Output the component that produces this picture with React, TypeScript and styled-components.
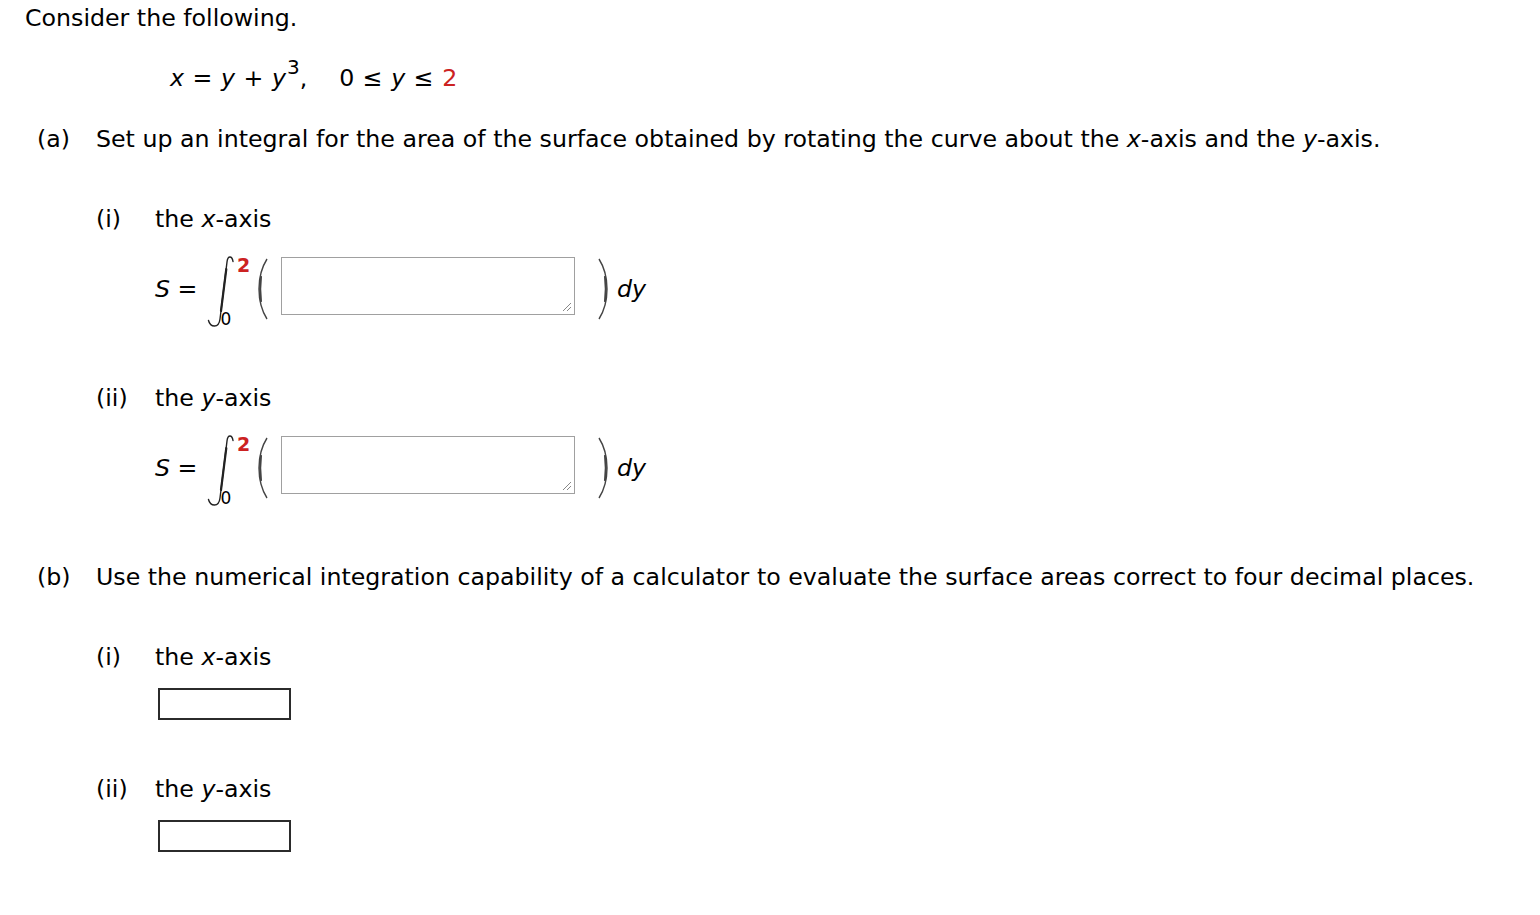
import React from "react";
import styled, { createGlobalStyle } from "styled-components";

const GlobalStyle = createGlobalStyle`
  html, body {
    margin: 0;
    padding: 0;
    background: #ffffff;
  }
  body {
    font-family: "DejaVu Sans", Verdana, sans-serif;
    font-size: 23.7px;
    color: #000;
  }
`;

const Page = styled.div`
  padding: 3px 0 40px 25px;
`;

const Line = styled.div<{ $top?: number; $indent?: number }>`
  line-height: 30px;
  height: 30px;
  margin-top: ${(p) => p.$top ?? 0}px;
  margin-left: ${(p) => p.$indent ?? 0}px;
  white-space: nowrap;
  display: flex;
  align-items: center;
`;

const Equation = styled(Line)`
  word-spacing: 1px;
`;

const Label = styled.span<{ $width: number }>`
  display: inline-block;
  width: ${(p) => p.$width}px;
  flex: none;
`;

const I = styled.i`
  font-style: italic;
`;

const Red = styled.span`
  color: #cc2222;
`;

const Sup = styled.sup`
  font-size: 20px;
  position: relative;
  top: -11px;
  line-height: 0;
  vertical-align: baseline;
  margin-left: 1px;
`;

const Gap = styled.span<{ $w: number }>`
  display: inline-block;
  width: ${(p) => p.$w}px;
`;

const IntegralRow = styled.div<{ $top: number }>`
  display: flex;
  align-items: center;
  height: 70px;
  margin-top: ${(p) => p.$top}px;
  margin-left: 130px;
`;

const Lhs = styled.span`
  width: 52px;
  flex: none;
`;

const IntegralSign = styled.span`
  position: relative;
  display: inline-block;
  width: 50px;
  height: 72px;
  flex: none;
`;

const Limit = styled.span<{ $upper?: boolean }>`
  position: absolute;
  ${(p) =>
    p.$upper
      ? "left: 30px; top: 2.8px; font-size: 19px; line-height: 19px; font-weight: bold; color: #cc2222;"
      : "left: 13.5px; top: 57.5px; font-size: 17px; line-height: 17px;"}
`;

const Paren = styled.svg`
  flex: none;
  display: block;
`;

const AnswerArea = styled.div`
  position: relative;
  box-sizing: border-box;
  width: 294px;
  height: 58px;
  border: 1.5px solid #a0a0a0;
  background: #fff;
  margin: 0 22px 7px 12px;
  flex: none;
`;

const Grip = styled.svg`
  position: absolute;
  right: 2px;
  bottom: 2px;
`;

const Dy = styled.i`
  font-style: italic;
  margin-left: 8px;
`;

const AnswerBox = styled.div<{ $top: number }>`
  box-sizing: border-box;
  width: 133px;
  height: 32px;
  border: 2px solid #2b2b2b;
  margin-top: ${(p) => p.$top}px;
  margin-left: 133px;
`;

const IntegralGlyph = () => (
  <svg width="30" height="76" viewBox="0 0 30 76" style={{ position: "absolute", left: 0, top: 0 }}>
    <path
      d="M26 8.5 C25.5 5.5 24.5 4 23 4 C21 4 20.3 6 20 9 L13 66 C12.5 70 10.5 73 7.5 73 C4.5 73 2.5 71.5 1.5 67.5"
      fill="none"
      stroke="#222"
      strokeWidth="1.4"
      strokeLinecap="round"
    />
    <path d="M19.3 16 L14 58" fill="none" stroke="#222" strokeWidth="2.2" strokeLinecap="round" />
  </svg>
);

const OpenParen = () => (
  <Paren width="12" height="62" viewBox="0 0 12 62">
    <path d="M10 1 C3 12 2 22 2 31 C2 40 3 50 10 61" fill="none" stroke="#444" strokeWidth="1.4" />
    <path d="M4 18 C3 26 3 36 4 44" fill="none" stroke="#444" strokeWidth="2.1" />
  </Paren>
);

const CloseParen = () => (
  <Paren width="12" height="62" viewBox="0 0 12 62">
    <path d="M2 1 C9 12 10 22 10 31 C10 40 9 50 2 61" fill="none" stroke="#444" strokeWidth="1.4" />
    <path d="M8 18 C9 26 9 36 8 44" fill="none" stroke="#444" strokeWidth="2.1" />
  </Paren>
);

const Integral: React.FC<{ top: number }> = ({ top }) => (
  <IntegralRow $top={top}>
    <Lhs>
      <I>S</I> =
    </Lhs>
    <IntegralSign>
      <IntegralGlyph />
      <Limit $upper>2</Limit>
      <Limit>0</Limit>
    </IntegralSign>
    <OpenParen />
    <AnswerArea>
      <Grip width="10" height="10" viewBox="0 0 10 10">
        <path d="M1 9 L9 1 M5 9 L9 5" stroke="#888" strokeWidth="1" />
      </Grip>
    </AnswerArea>
    <CloseParen />
    <Dy>dy</Dy>
  </IntegralRow>
);

export default function App() {
  return (
    <Page>
      <GlobalStyle />
      <Line>Consider the following.</Line>
      <Equation $top={30} $indent={145}>
        <I>x</I>&nbsp;=&nbsp;<I>y</I>&nbsp;+&nbsp;<I>y</I>
        <Sup>3</Sup>,<Gap $w={32} />0&nbsp;≤&nbsp;<I>y</I>&nbsp;≤&nbsp;<Red>2</Red>
      </Equation>
      <Line $top={31} $indent={12}>
        <Label $width={59}>(a)</Label>
        Set up an integral for the area of the surface obtained by rotating the curve about the&nbsp;
        <I>x</I>-axis and the&nbsp;<I>y</I>-axis.
      </Line>

      <Line $top={50} $indent={71}>
        <Label $width={59}>(i)</Label>
        the&nbsp;<I>x</I>-axis
      </Line>
      <Integral top={20} />

      <Line $top={59} $indent={71}>
        <Label $width={59}>(ii)</Label>
        the&nbsp;<I>y</I>-axis
      </Line>
      <Integral top={20} />

      <Line $top={59} $indent={12}>
        <Label $width={59}>(b)</Label>
        Use the numerical integration capability of a calculator to evaluate the surface areas correct
        to four decimal places.
      </Line>

      <Line $top={50} $indent={71}>
        <Label $width={59}>(i)</Label>
        the&nbsp;<I>x</I>-axis
      </Line>
      <AnswerBox $top={16} />

      <Line $top={54} $indent={71}>
        <Label $width={59}>(ii)</Label>
        the&nbsp;<I>y</I>-axis
      </Line>
      <AnswerBox $top={16} />
    </Page>
  );
}
